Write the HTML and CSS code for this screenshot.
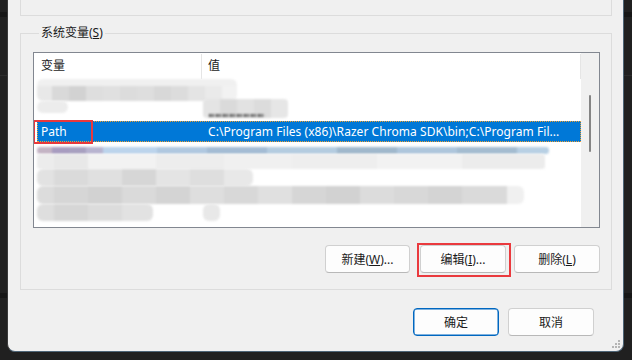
FILE: index.html
```html
<!DOCTYPE html>
<html lang="zh-CN">
<head>
    <meta charset="UTF-8">
    <title>环境变量</title>
    <link rel="stylesheet" href="styles.css">
</head>
<body>
    <div class="dialog">
        <div class="group-top"></div>

        <fieldset class="group">
            <legend>系统变量(<u>S</u>)</legend>

            <div class="list">
                <div class="list-main">
                    <div class="list-head">
                        <div class="col-name">变量</div>
                        <div class="col-value">值</div>
                    </div>

                    <div class="smudge s-row1"></div>
                    <div class="smudge-line s-row2">
                        <div class="smudge s-row2a"></div>
                        <div class="smudge s-row2b"><div class="ghost"></div></div>
                    </div>

                    <div class="row selected">
                        <div class="col-name">Path<span class="mark"></span></div>
                        <div class="col-value">C:\Program Files (x86)\Razer Chroma SDK\bin;C:\Program Fil...</div>
                    </div>

                    <div class="smudge s-blue"></div>
                    <div class="smudge s-light"></div>
                    <div class="smudge s-gray"></div>
                    <div class="smudge s-wide"></div>
                    <div class="smudge-line s-last">
                        <div class="smudge s-lasta"></div>
                        <div class="smudge s-lastb"></div>
                    </div>
                </div>
                <div class="scrollbar"><div class="thumb"></div></div>
            </div>

            <div class="btn-row">
                <button class="btn btn-new">新建(<u>W</u>)...</button>
                <span class="edit-mark"><button class="btn">编辑(<u>I</u>)...</button></span>
                <button class="btn">删除(<u>L</u>)</button>
            </div>
        </fieldset>

        <div class="footer">
            <button class="btn btn-default">确定</button>
            <button class="btn">取消</button>
        </div>

        <svg class="grip" width="12" height="12" viewBox="0 0 12 12">
            <rect x="9" y="1" width="2" height="2" fill="#b4b4b4"/>
            <rect x="6" y="4" width="2" height="2" fill="#b4b4b4"/>
            <rect x="9" y="4" width="2" height="2" fill="#b4b4b4"/>
            <rect x="3" y="7" width="2" height="2" fill="#b4b4b4"/>
            <rect x="6" y="7" width="2" height="2" fill="#b4b4b4"/>
            <rect x="9" y="7" width="2" height="2" fill="#b4b4b4"/>
        </svg>
    </div>
</body>
</html>
```

FILE: styles.css
```css
* {
    box-sizing: border-box;
}

body {
    margin: 0;
    width: 632px;
    height: 360px;
    overflow: hidden;
    padding-left: 7px;
    font-family: "Noto Sans", "Noto Sans CJK SC", sans-serif;
    font-size: 12px;
    color: #1a1a1a;
    background:
        linear-gradient(#161616, #161616) 0 12px / 100% 5px no-repeat,
        linear-gradient(#2c2c2c, #2c2c2c) 0 75px / 100% 1px no-repeat,
        linear-gradient(#161616, #161616) 0 293px / 100% 5px no-repeat,
        #202020;
}

.dialog {
    position: relative;
    width: 617px;
    height: 352px;
    background: #f0f0f0;
    border-left: 1px solid #3a3a3a;
    border-right: 1px solid #4d6476;
    border-bottom: 1px solid #4d6476;
    border-radius: 0 0 8px 8px;
    padding-left: 12px;
}

.group-top {
    width: 592px;
    height: 16px;
    border: 1px solid #dcdcdc;
    border-top: none;
}

/* system variables group */
.group {
    width: 592px;
    margin: 9px 0 0;
    padding: 11px 10px 16px 12px;
    border: 1px solid #dcdcdc;
}

.group legend {
    margin-left: 6px;
    padding: 0 2px 0 2px;
    line-height: 16px;
    color: #1a1a1a;
}

.list {
    display: flex;
    width: 567px;
    height: 176px;
    border: 1px solid #828790;
    background: #fff;
}

.list-main {
    flex: 1;
    padding-left: 3px;
    overflow: hidden;
}

.list-head {
    display: flex;
    height: 25px;
    align-items: stretch;
    border-right: 1px solid #e5e5e5;
    margin-top: 1px;
    line-height: 23px;
}

.list-head .col-name {
    border-right: 1px solid #e5e5e5;
}

.col-name {
    position: relative;
    width: 165px;
    padding-left: 4px;
    flex: none;
}

.col-value {
    padding-left: 6px;
    white-space: nowrap;
    letter-spacing: 0.05px;
}

.row {
    display: flex;
    height: 21px;
    line-height: 21px;
}

.row.selected {
    background: #0078d7;
    color: #fff;
    outline: 1px dotted #f0a030;
    outline-offset: -1px;
}

.mark {
    position: absolute;
    left: -4px;
    top: -1px;
    width: 60px;
    height: 24px;
    border: 2px solid #e8383d;
}

.scrollbar {
    width: 18px;
    flex: none;
    background: #f0f0f0;
    padding: 42px 0 0 8px;
}

.thumb {
    width: 2px;
    height: 57px;
    background: #858585;
    border-radius: 1px;
}

/* blurred entries */
.smudge {
    border-radius: 6px;
    filter: blur(0.8px);
}

.smudge-line {
    display: flex;
    align-items: flex-start;
}

.s-row1 {
    width: 200px;
    height: 22px;
    background:
        linear-gradient(#f0f0f0, #f0f0f0) 0 0 / 100% 7px no-repeat,
        linear-gradient(90deg, #e8e8e8 0 15px, #d9d9d9 15px 32px, #d2d2d2 32px 49px, #dedede 49px 66px,
            #e0e0e0 66px 83px, #dcdcdc 83px 100px, #dedede 100px 117px, #d8d8d8 117px 134px,
            #dcdcdc 134px 151px, #e4e4e4 151px 168px, #eaeaea 168px 185px, #f2f2f2 185px);
}

.s-row2 {
    height: 20px;
}

.s-row2a {
    width: 31px;
    height: 12px;
    background: #ececec;
}

.s-row2b {
    width: 85px;
    height: 19px;
    margin-left: 135px;
    margin-top: -2px;
    padding: 15px 0 0 6px;
    border-radius: 4px;
    background: linear-gradient(90deg, #e4e4e4 0 17px, #dadada 17px 34px, #e2e2e2 34px 51px, #dcdcdc 51px 68px, #e6e6e6 68px);
}

.ghost {
    width: 56px;
    height: 3px;
    background: repeating-linear-gradient(90deg, #4a4a4a 0 2px, #b8b8b8 2px 3px, #6a6a6a 3px 5px, #c8c8c8 5px 7px);
}

.s-blue {
    width: 512px;
    height: 7px;
    margin-top: 5px;
    border-radius: 3px;
    background: linear-gradient(90deg, #c4b4c4 0 15px, #a89cc0 15px 32px, #a8a0c0 32px 49px, #b8b4d0 49px 66px,
        #bcd4ec 66px 120px, #b0c8e0 120px 170px, #a4bcd4 170px 230px, #b4cce0 230px 300px,
        #a0b8cc 300px 360px, #aec6dc 360px 420px, #a4bcd0 420px 480px, #b8d0e4 480px);
}

.s-light {
    width: 508px;
    height: 15px;
    border-radius: 3px;
    background: linear-gradient(90deg, #ececec 0 17px, #e8e8e8 17px 51px, #f2f2f2 51px 119px, #ededed 119px 187px,
        #f0f0f0 187px 255px, #eeeeee 255px 340px, #f2f2f2 340px 425px, #ececec 425px);
}

.s-gray {
    width: 216px;
    height: 17px;
    background: linear-gradient(90deg, #e2e2e2 0 17px, #dadada 17px 51px, #e0e0e0 51px 85px, #d6d6d6 85px 119px,
        #e4e4e4 119px 153px, #dedede 153px 187px, #e8e8e8 187px);
}

.s-wide {
    width: 487px;
    height: 18px;
    background: linear-gradient(90deg, #dcdcdc 0 17px, #d6d6d6 17px 51px, #d2d2d2 51px 85px, #dadada 85px 119px,
        #d4d4d4 119px 153px, #dedede 153px 187px, #d8d8d8 187px 221px, #e0e0e0 221px 255px,
        #d6d6d6 255px 289px, #d2d2d2 289px 323px, #dcdcdc 323px 357px, #d8d8d8 357px 391px,
        #d4d4d4 391px 425px, #dadada 425px 470px, #f0f0f0 470px);
}

.s-last {
    height: 17px;
}

.s-lasta {
    width: 116px;
    height: 17px;
    background: linear-gradient(90deg, #dedede 0 17px, #d6d6d6 17px 51px, #dcdcdc 51px 85px, #e2e2e2 85px);
}

.s-lastb {
    width: 17px;
    height: 17px;
    margin-left: 50px;
    background: #e8e8e8;
}

/* buttons */
.btn-row {
    display: flex;
    align-items: flex-start;
    justify-content: flex-end;
    margin-top: 17px;
    padding-right: 1px;
}

.btn {
    width: 86px;
    height: 28px;
    padding: 0;
    font-family: inherit;
    font-size: 12px;
    color: #1a1a1a;
    background: #fdfdfd;
    border: 1px solid #d0d0d0;
    border-bottom-color: #b8b8b8;
    border-radius: 4px;
}

.btn-new {
    width: 85px;
    margin-right: 7px;
}

.edit-mark {
    display: flex;
    margin: -2px 3px -4px 0;
    padding: 0 3px 2px 1px;
    border: 2px solid #ea3a3e;
}

.btn-default {
    border: 1px solid #0067c0;
    box-shadow: inset 0 0 0 0.5px #0067c0;
}

.footer {
    display: flex;
    justify-content: flex-end;
    gap: 9px;
    margin-top: 18px;
    padding-right: 29px;
}

.grip {
    position: absolute;
    right: 2px;
    bottom: 0;
}
```
